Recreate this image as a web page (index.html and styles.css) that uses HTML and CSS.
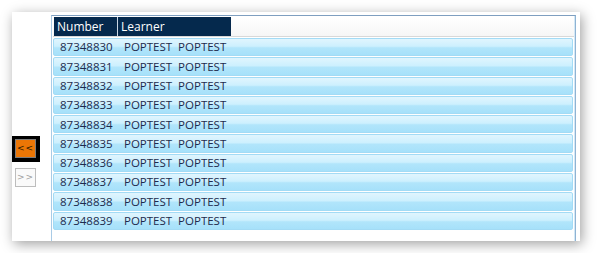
FILE: index.html
```html
<!DOCTYPE html>
<html>
<head>
<meta charset="utf-8">
<link rel="stylesheet" href="styles.css">
</head>
<body>
<div class="panel">
  <div class="side">
    <div class="btn-frame"><div class="btn btn-active">&lt;&lt;</div></div>
    <div class="btn btn-idle">&gt;&gt;</div>
  </div>
  <div class="grid">
    <div class="head">
      <div class="hcell hnum">Number</div>
      <div class="hcell hlearn">Learner</div>
    </div>
    <div class="rows">
      <div class="row"><span class="num">87348830</span><span class="name">POPTEST  POPTEST</span></div>
      <div class="row"><span class="num">87348831</span><span class="name">POPTEST  POPTEST</span></div>
      <div class="row"><span class="num">87348832</span><span class="name">POPTEST  POPTEST</span></div>
      <div class="row"><span class="num">87348833</span><span class="name">POPTEST  POPTEST</span></div>
      <div class="row"><span class="num">87348834</span><span class="name">POPTEST  POPTEST</span></div>
      <div class="row"><span class="num">87348835</span><span class="name">POPTEST  POPTEST</span></div>
      <div class="row"><span class="num">87348836</span><span class="name">POPTEST  POPTEST</span></div>
      <div class="row"><span class="num">87348837</span><span class="name">POPTEST  POPTEST</span></div>
      <div class="row"><span class="num">87348838</span><span class="name">POPTEST  POPTEST</span></div>
      <div class="row"><span class="num">87348839</span><span class="name">POPTEST  POPTEST</span></div>
    </div>
  </div>
</div>
</body>
</html>
```
FILE: styles.css
```css
html, body {
  margin: 0;
  padding: 0;
  background: #ffffff;
}
body {
  padding: 12px;
  font-family: "Open Sans", "Noto Sans", sans-serif;
  font-size: 11.5px;
}
.panel {
  width: 568px;
  height: 229px;
  background: #ffffff;
  display: flex;
  box-shadow: 2px 3px 12px rgba(0, 0, 0, 0.38);
}
.side {
  width: 39px;
  flex: none;
  display: flex;
  flex-direction: column;
  align-items: flex-start;
  padding-top: 124px;
  box-sizing: border-box;
}
.btn-frame {
  background: #000000;
  padding: 3px 4px 4px 3px;
}
.btn {
  width: 21px;
  height: 19px;
  box-sizing: border-box;
  display: flex;
  align-items: center;
  justify-content: center;
  font-family: "DejaVu Sans", sans-serif;
  font-size: 9px;
  letter-spacing: 1px;
  line-height: 1;
}
.btn-active {
  background: #ec7605;
  border: 1px solid #7c7c7c;
  color: #2a1a00;
}
.btn-idle {
  margin-top: 6px;
  margin-left: 3px;
  background: #fafafa;
  border: 1px solid #bdbdbd;
  color: #a0a0a0;
}
.grid {
  flex: 1;
  margin-top: 3px;
  margin-right: 4px;
  border: 1px solid #a9cbe6;
  border-bottom: none;
  border-top-color: #7f9fc0;
  border-right-color: #8fb3d3;
  padding: 1px 1px 0 1px;
  box-shadow: inset -1px 0 0 #d3e8f6;
}
.head {
  display: flex;
  height: 20px;
  border-bottom: 1px solid #d8d8d8;
  box-sizing: border-box;
  background: linear-gradient(#ffffff, #f6f6f6);
}
.hcell {
  background: #05294d;
  color: #ffffff;
  font-size: 12px;
  line-height: 19px;
  padding-left: 3px;
  box-sizing: border-box;
}
.hnum {
  margin-left: 1px;
  width: 64px;
  border-right: 1px solid #c9d6e4;
}
.hlearn {
  width: 113px;
}
.rows {
  display: flex;
  flex-direction: column;
  padding-right: 1px;
}
.row {
  height: 18.3px;
  margin-top: 1px;
  box-sizing: border-box;
  border: 1px solid #a3dbf5;
  border-radius: 2px;
  background: linear-gradient(#e0f5fe 0%, #cdf0fe 45%, #b1e5fb 55%, #a6e1fa 100%);
  display: flex;
  align-items: center;
  color: #1d2b4d;
  white-space: pre;
  line-height: 1;
}
.num {
  width: 64px;
  padding-left: 6px;
  box-sizing: border-box;
}
.name {
  padding-left: 6px;
}
```
